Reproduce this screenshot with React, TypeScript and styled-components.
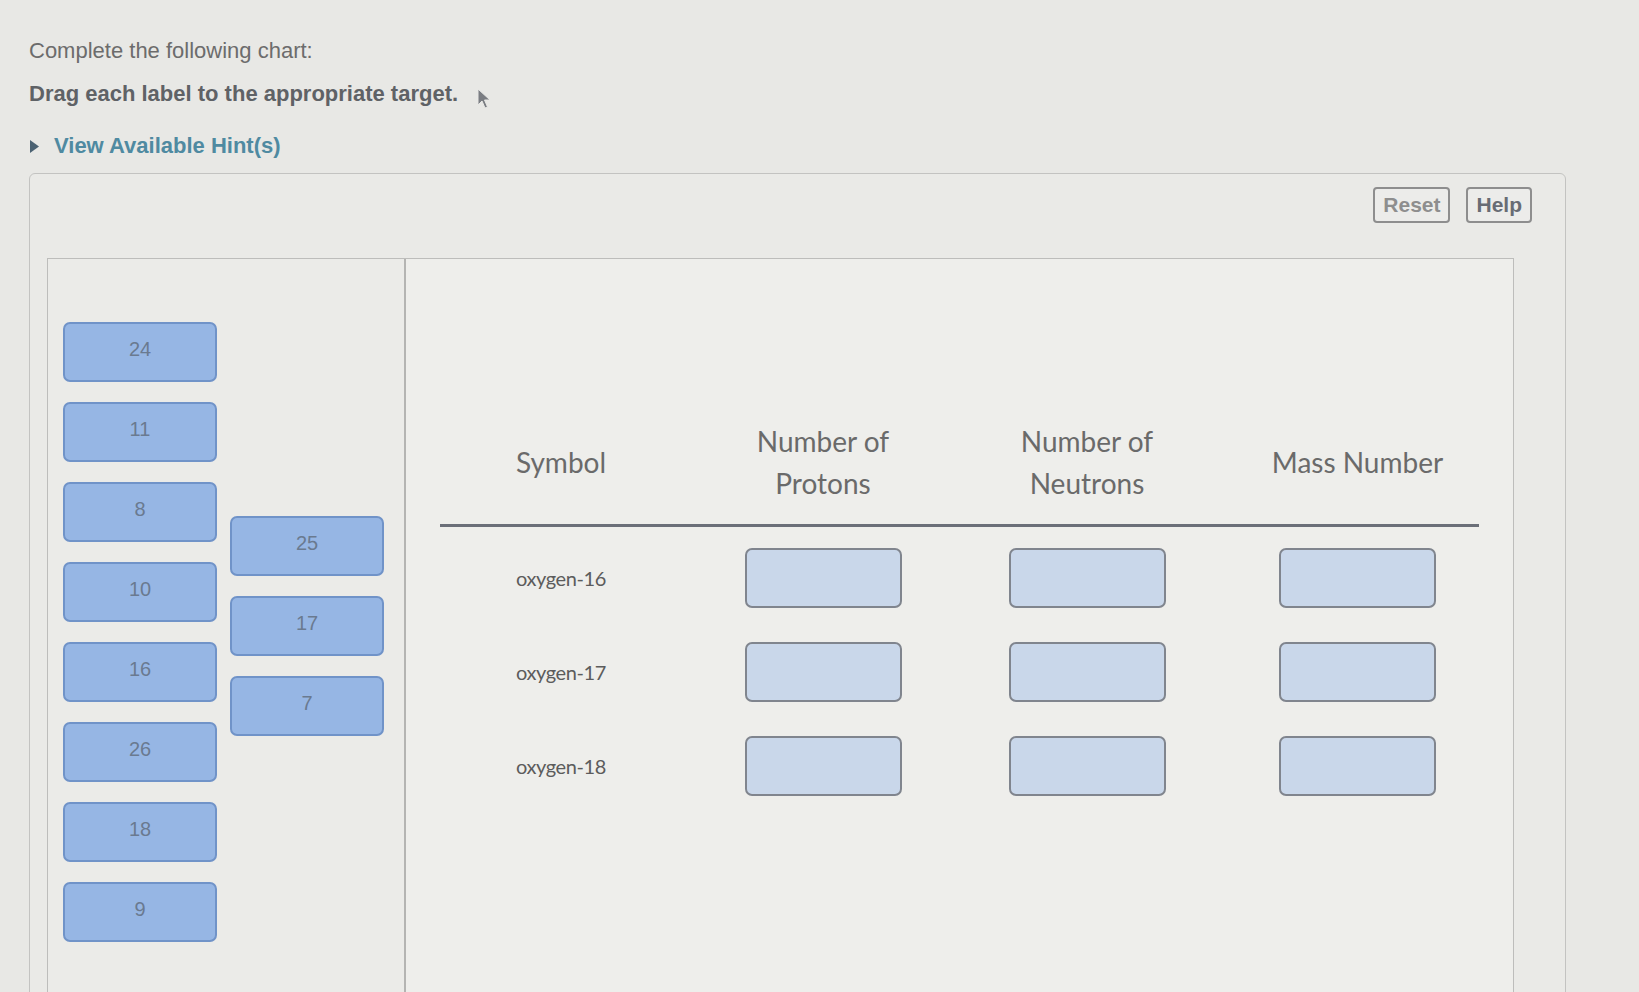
import { Fragment } from "react";
import styled, { createGlobalStyle } from "styled-components";

const GlobalStyle = createGlobalStyle`
  body {
    margin: 0;
    background: #e8e8e5;
    font-family: "Liberation Sans", Arial, sans-serif;
  }
`;

const Page = styled.div`
  padding: 37px 0 0 29px;
  width: 1537px;
`;

const Title = styled.div`
  font-size: 22px;
  line-height: 28px;
  color: #6c6c6c;
`;

const Instruction = styled.div`
  display: flex;
  align-items: center;
  margin-top: 13px;
  font-size: 22px;
  line-height: 28px;
  font-weight: bold;
  color: #5f6266;
`;

const Cursor = styled.svg`
  margin-left: 18px;
  margin-top: 10px;
`;

const Hint = styled.div`
  display: flex;
  align-items: center;
  gap: 14px;
  margin-top: 22px;
  font-size: 22px;
  line-height: 28px;
  font-weight: bold;
  color: #4f8aa1;
`;

const Panel = styled.div`
  margin-top: 13px;
  border: 1px solid #c3c3c1;
  border-radius: 6px;
  padding: 13px 33px 0 17px;
  min-height: 820px;
  background: #eaeae7;
`;

const Toolbar = styled.div`
  display: flex;
  justify-content: flex-end;
  gap: 16px;
`;

const ToolButton = styled.button<{ $muted?: boolean }>`
  height: 36px;
  padding: 0 8px;
  border: 2px solid #8e8e8e;
  border-radius: 4px;
  background: #ececea;
  font-family: "Liberation Sans", Arial, sans-serif;
  font-size: 21px;
  font-weight: bold;
  color: ${(p) => (p.$muted ? "#8e8e8e" : "#686c74")};
`;

const Board = styled.div`
  display: grid;
  grid-template-columns: 358px minmax(0, 1fr);
  margin: 35px 18px 0 0;
  border: 1px solid #bdbdbb;
  border-bottom: none;
  min-height: 740px;
`;

const Bank = styled.div`
  display: flex;
  gap: 13px;
  padding: 63px 0 0 15px;
  border-right: 2px solid #b4b4b2;
  background: #ebebe8;
`;

const BankColumn = styled.div<{ $offset?: number }>`
  display: flex;
  flex-direction: column;
  gap: 20px;
  margin-top: ${(p) => p.$offset ?? 0}px;
`;

const Label = styled.div`
  width: 154px;
  height: 60px;
  box-sizing: border-box;
  display: flex;
  align-items: center;
  justify-content: center;
  padding-bottom: 5px;
  background: #96b6e4;
  border: 2px solid #7093c8;
  border-radius: 7px;
  font-size: 20px;
  color: #6a7a90;
`;

const Chart = styled.div`
  padding: 161px 8px 0 34px;
  background: #eeeeeb;
  font-family: Lato, "Open Sans", sans-serif;
  color: #6a6a6a;
`;

const Grid = styled.div`
  display: grid;
  grid-template-columns: 242px 282px 246px minmax(0, 1fr);
  align-items: center;
  justify-items: center;
`;

const HeaderCell = styled.div`
  font-size: 28px;
  line-height: 42px;
  text-align: center;
  height: 84px;
  display: flex;
  align-items: center;
`;

const Rule = styled.div`
  height: 3px;
  background: #6b6f78;
  margin: 20px 26px 21px 0;
`;

const Rows = styled(Grid)`
  row-gap: 34px;
`;

const RowName = styled.div`
  font-size: 20px;
  color: #5c5c5c;
  letter-spacing: -0.4px;
`;

const Target = styled.div`
  width: 157px;
  height: 60px;
  box-sizing: border-box;
  background: #c9d7ea;
  border: 2px solid #80858e;
  border-radius: 7px;
`;

const bankLeft = ["24", "11", "8", "10", "16", "26", "18", "9"];
const bankRight = ["25", "17", "7"];
const isotopes = ["oxygen-16", "oxygen-17", "oxygen-18"];

export default function App() {
  return (
    <>
      <GlobalStyle />
      <Page>
        <Title>Complete the following chart:</Title>
        <Instruction>
          Drag each label to the appropriate target.
          <Cursor width="16" height="22" viewBox="0 0 16 22">
            <path
              d="M2 1 L2 17 L6 13 L9 20 L11.5 19 L8.5 12 L14 12 Z"
              fill="#7a7d82"
              stroke="#e8e8e5"
              strokeWidth="1"
            />
          </Cursor>
        </Instruction>
        <Hint>
          <svg width="11" height="15" viewBox="0 0 11 15">
            <path d="M1 1 L10 7.5 L1 14 Z" fill="#4b6272" />
          </svg>
          View Available Hint(s)
        </Hint>
        <Panel>
          <Toolbar>
            <ToolButton $muted>Reset</ToolButton>
            <ToolButton>Help</ToolButton>
          </Toolbar>
          <Board>
            <Bank>
              <BankColumn>
                {bankLeft.map((n) => (
                  <Label key={n}>{n}</Label>
                ))}
              </BankColumn>
              <BankColumn $offset={194}>
                {bankRight.map((n) => (
                  <Label key={n}>{n}</Label>
                ))}
              </BankColumn>
            </Bank>
            <Chart>
              <Grid>
                <HeaderCell>Symbol</HeaderCell>
                <HeaderCell>
                  Number of
                  <br />
                  Protons
                </HeaderCell>
                <HeaderCell>
                  Number of
                  <br />
                  Neutrons
                </HeaderCell>
                <HeaderCell>Mass Number</HeaderCell>
              </Grid>
              <Rule />
              <Rows>
                {isotopes.map((name) => (
                  <Fragment key={name}>
                    <RowName>{name}</RowName>
                    <Target />
                    <Target />
                    <Target />
                  </Fragment>
                ))}
              </Rows>
            </Chart>
          </Board>
        </Panel>
      </Page>
    </>
  );
}
